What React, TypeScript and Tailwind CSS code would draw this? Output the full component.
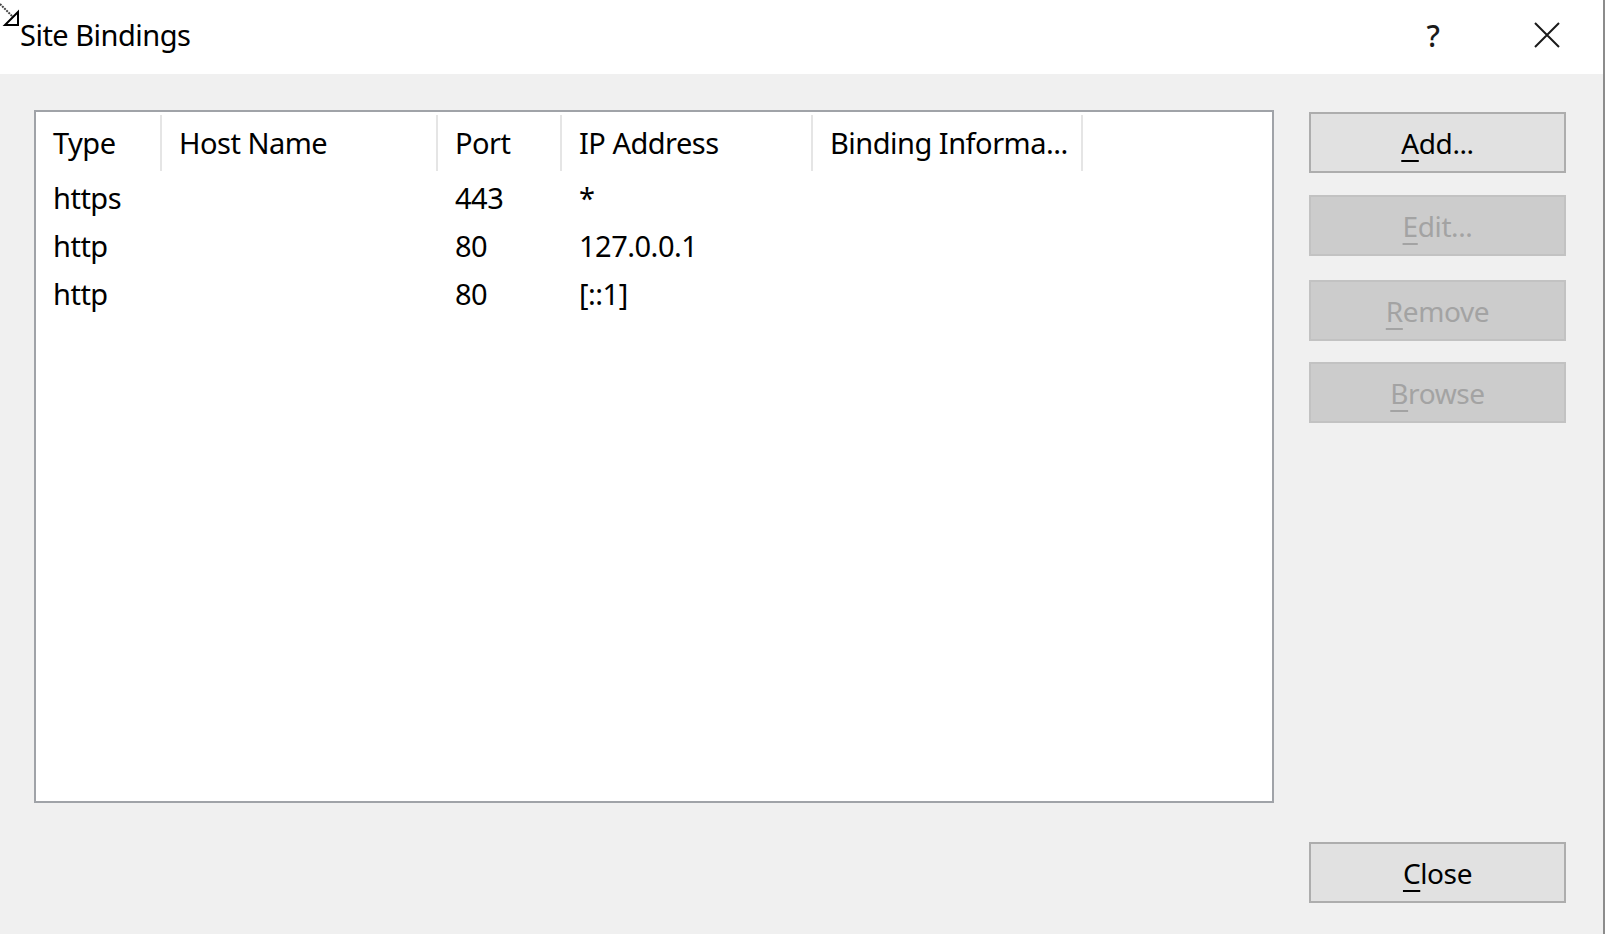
import React from "react";

const font = { fontFamily: '"Noto Sans", "Open Sans", sans-serif' };

const columns = [
  { label: "Type", width: "w-[126px]" },
  { label: "Host Name", width: "w-[276px]" },
  { label: "Port", width: "w-[124px]" },
  { label: "IP Address", width: "w-[251px]" },
  { label: "Binding Informa...", width: "w-[270px]" },
];

const rows = [
  ["https", "", "443", "*", ""],
  ["http", "", "80", "127.0.0.1", ""],
  ["http", "", "80", "[::1]", ""],
];

const cellWidths = ["w-[126px]", "w-[276px]", "w-[124px]", "w-[251px]", "w-[270px]"];

function DialogButton({ hotkey, rest, disabled }: { hotkey: string; rest: string; disabled?: boolean }) {
  return (
    <button
      className={`h-[61px] w-full border-2 text-[28px] tracking-[-0.4px] leading-none flex items-center justify-center ${
        disabled
          ? "bg-[#cccccc] border-[#c2c2c2] text-[#a3a3a3]"
          : "bg-[#e1e1e1] border-[#adadad] text-black"
      }`}
    >
      <span className="underline underline-offset-[6px] decoration-2">{hotkey}</span>
      <span>{rest}</span>
    </button>
  );
}

export default function App() {
  return (
    <div className="flex w-[1607px] h-[934px] overflow-hidden bg-white" style={font}>
      {/* Dialog window */}
      <div className="flex flex-col w-[1603px] h-full">
        {/* Title bar */}
        <div className="relative h-[74px] bg-white flex items-center pl-[20px] pb-[4px] shrink-0">
          <svg className="absolute left-0 top-0" width="24" height="28" viewBox="0 0 24 28">
            <path d="M0 4 L14 18" stroke="#444" strokeWidth="2" strokeDasharray="2 1" />
            <path d="M18 12 L18 25 L5 25 Z" fill="white" stroke="black" strokeWidth="2" />
          </svg>
          <span className="text-[29px] tracking-[-0.5px] text-black">Site Bindings</span>
          <span className="ml-auto mr-[93px] text-[30px] text-[#1a1a1a] font-medium">?</span>
          <svg className="mr-[42px]" width="28" height="28" viewBox="0 0 28 28">
            <path d="M2 2 L26 26 M26 2 L2 26" stroke="#1a1a1a" strokeWidth="2" />
          </svg>
        </div>

        {/* Body */}
        <div className="flex flex-1 bg-[#f0f0f0] pt-[36px] pl-[34px]">
          {/* List view */}
          <div className="w-[1240px] h-[693px] border-2 border-[#a0a3a8] bg-white text-[29px] tracking-[-0.5px] text-black">
            <div className="flex h-[62px] items-stretch">
              {columns.map((c) => (
                <div key={c.label} className={`${c.width} flex items-center pl-[17px] border-r-2 border-[#e5e5e5] my-[3px] whitespace-nowrap`}>
                  {c.label}
                </div>
              ))}
            </div>
            {rows.map((r, i) => (
              <div key={i} className="flex h-[48px] items-center">
                {r.map((v, j) => (
                  <div key={j} className={`${cellWidths[j]} pl-[17px] whitespace-nowrap`}>
                    {v}
                  </div>
                ))}
              </div>
            ))}
          </div>

          {/* Buttons */}
          <div className="ml-[35px] w-[257px] flex flex-col pt-[2px] pb-[31px]">
            <DialogButton hotkey="A" rest="dd..." />
            <div className="mt-[22px]">
              <DialogButton hotkey="E" rest="dit..." disabled />
            </div>
            <div className="mt-[24px]">
              <DialogButton hotkey="R" rest="emove" disabled />
            </div>
            <div className="mt-[21px]">
              <DialogButton hotkey="B" rest="rowse" disabled />
            </div>
            <div className="mt-auto">
              <DialogButton hotkey="C" rest="lose" />
            </div>
          </div>
        </div>
      </div>
      {/* Window edge */}
      <div className="w-[2px] h-full bg-[#8c8c8c]" />
      <div className="flex-1 h-full bg-white" />
    </div>
  );
}
